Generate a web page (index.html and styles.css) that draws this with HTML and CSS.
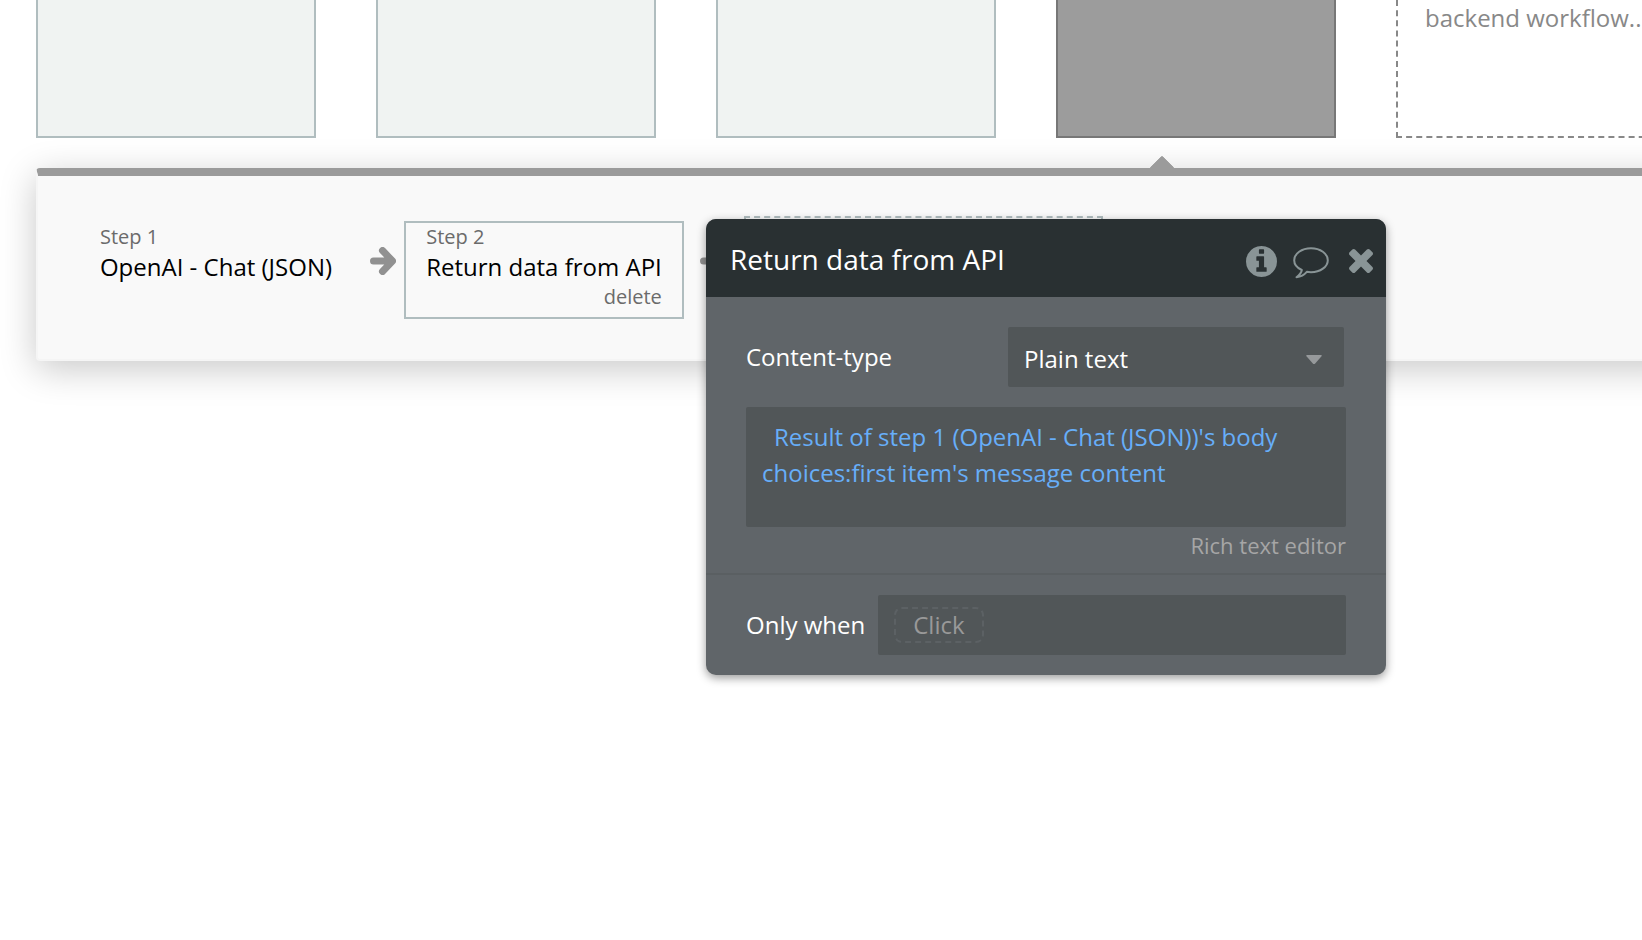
FILE: index.html
```html
<!DOCTYPE html>
<html lang="en">
<head>
    <meta charset="UTF-8">
    <meta name="viewport" content="width=device-width, initial-scale=1.0">
    <title>Backend Workflows</title>
    <link rel="stylesheet" href="styles.css">
</head>
<body>
    <div class="workflows">
        <div class="events">
            <div class="event"></div>
            <div class="event"></div>
            <div class="event"></div>
            <div class="event active"></div>
            <div class="event new-event">backend workflow...</div>
        </div>

        <div class="actions">
            <div class="notch"></div>
            <div class="step">
                <div class="step-text">
                    <div class="step-number">Step 1</div>
                    <div class="step-name">OpenAI - Chat (JSON)</div>
                </div>
            </div>
            <svg class="arrow" viewBox="0 0 26 28">
                <path d="M3.5 14H21M12.500 3.500L22.500 14L12.500 24.500" />
            </svg>
            <div class="step selected">
                <div class="step-text">
                    <div class="step-number">Step 2</div>
                    <div class="step-name">Return data from API</div>
                    <button type="button" class="delete-btn">delete</button>
                </div>
            </div>
            <svg class="arrow second" viewBox="0 0 26 28">
                <path d="M3.5 14H21M12.500 3.500L22.500 14L12.500 24.500" />
            </svg>
            <div class="new-step"></div>
        </div>
    </div>

    <div class="editor">
        <div class="editor-header">
            <h1>Return data from API</h1>
            <button type="button" class="icon-btn" aria-label="Info">
                <svg width="31" height="31" viewBox="128 128 1536 1536">
                    <path d="M1152 1376v-160q0-14-9-23t-23-9h-96v-512q0-14-9-23t-23-9h-320q-14 0-23 9t-9 23v160q0 14 9 23t23 9h96v320h-96q-14 0-23 9t-9 23v160q0 14 9 23t23 9h448q14 0 23-9t9-23zm-128-896v-160q0-14-9-23t-23-9h-192q-14 0-23 9t-9 23v160q0 14 9 23t23 9h192q14 0 23-9t9-23zm640 416q0 209-103 385.5t-279.5 279.5-385.5 103-385.5-103-279.5-279.5-103-385.5 103-385.5 279.5-279.5 385.5-103 385.5 103 279.5 279.5 103 385.5z" />
                </svg>
            </button>
            <button type="button" class="icon-btn comment-btn" aria-label="Comment">
                <svg width="36" height="32" viewBox="0 0 36 32">
                    <path d="M18 1.200C8.700 1.200 1.200 6.600 1.200 13.200C1.200 17.200 4.200 20.900 8.800 23C8.400 26 6.500 28 3.500 30.200C7.500 29.700 11 28 13.800 24.800C15.200 25.100 16.600 25.200 18 25.200C27.300 25.200 34.800 19.800 34.800 13.200C34.800 6.600 27.300 1.200 18 1.200Z" />
                </svg>
            </button>
            <button type="button" class="icon-btn" aria-label="Close">
                <svg width="24" height="24" viewBox="302 366 1188 1188">
                    <path d="M1490 1322q0 40-28 68l-136 136q-28 28-68 28t-68-28l-294-294-294 294q-28 28-68 28t-68-28l-136-136q-28-28-28-68t28-68l294-294-294-294q-28-28-28-68t28-68l136-136q28-28 68-28t68 28l294 294 294-294q28-28 68-28t68 28l136 136q28 28 28 68t-28 68l-294 294 294 294q28 28 28 68z" />
                </svg>
            </button>
        </div>

        <div class="editor-body">
            <div class="row type-row">
                <label for="contentType">Content-type</label>
                <div class="select-box">
                    <select id="contentType">
                        <option>Plain text</option>
                    </select>
                    <svg class="caret" width="16" height="10" viewBox="0 0 16 10">
                        <path d="M1 0H15Q16.500 0 15.500 1.300L9.200 8.500Q8 9.700 6.800 8.500L.5 1.300Q-.5 0 1 0Z" />
                    </svg>
                </div>
            </div>
            <textarea class="expression" aria-label="Returned text">Result of step 1 (OpenAI - Chat (JSON))'s body choices:first item's message content</textarea>
            <a href="#" class="rich-text">Rich text editor</a>
        </div>

        <div class="row condition">
            <span id="onlyWhen">Only when</span>
            <div class="condition-box">
                <button type="button" class="click-btn" aria-labelledby="onlyWhen">Click</button>
            </div>
        </div>
    </div>
</body>
</html>
```
FILE: styles.css
```css
/* General Styles */
* {
    box-sizing: border-box;
}

body {
    font-family: "Open Sans", "Noto Sans", sans-serif;
    font-size: 24px;
    line-height: 34px;
    margin: 0;
    background: #ffffff;
    color: #000000;
    position: relative;
    min-height: 100vh;
    overflow: hidden;
}

button, select, textarea {
    font: inherit;
    border: none;
    margin: 0;
    padding: 0;
    background: transparent;
}

button {
    cursor: pointer;
}

/* Workflow events */
.workflows {
    padding-left: 36px;
}

.events {
    display: flex;
    gap: 60px;
    margin-bottom: 30px;
}

.event {
    flex: 0 0 280px;
    height: 138px;
    background: #f0f3f2;
    border: 2px solid #b0bdbf;
    border-top: none;
}

.event.active {
    background: #9c9c9c;
    border-color: #777777;
}

.event.new-event {
    flex-basis: 360px;
    background: transparent;
    border: 2px dashed #888888;
    border-top: none;
    padding: 1px 27px;
    color: #888888;
}

/* Actions panel */
.actions {
    position: relative;
    display: flex;
    align-items: flex-start;
    height: 193px;
    margin-right: -40px;
    padding: 40px 38px 0;
    background: #f9f9f9;
    border: 2px solid #f5f5f5;
    border-top: 8px solid #9b9b9b;
    border-radius: 4px;
    box-shadow: 0 8px 36px rgba(0, 0, 0, 0.22);
}

.notch {
    position: absolute;
    left: 1115px;
    top: -17px;
    width: 18px;
    height: 18px;
    background: #9b9b9b;
    border-radius: 2px;
    transform: rotate(45deg);
    clip-path: polygon(0 0, 100% 0, 0 100%);
}

.step {
    flex: 0 0 280px;
    display: flex;
    justify-content: center;
    margin-top: 5px;
    padding: 1px 0 7px;
    border: 2px solid transparent;
}

.step.selected {
    border-color: #b0bdbf;
}

.step-number {
    font-size: 20px;
    line-height: 26px;
    color: #6b6b6b;
}

.delete-btn {
    display: block;
    margin-left: auto;
    font-size: 20px;
    line-height: 26px;
    color: #6b6b6b;
}

.arrow {
    flex: none;
    width: 26px;
    height: 28px;
    margin: 31px 8px 0 14px;
    fill: none;
    stroke: #919191;
    stroke-width: 7;
    stroke-linecap: round;
    stroke-linejoin: round;
}

.arrow.second {
    margin-left: 16px;
    margin-right: 18px;
}

.new-step {
    flex: 0 0 359px;
    height: 108px;
    border: 2px dashed #b0bdbf;
}

/* Property editor */
.editor {
    position: absolute;
    left: 706px;
    top: 219px;
    width: 680px;
    background: #606569;
    border-radius: 10px;
    box-shadow: 0 3px 10px rgba(0, 0, 0, 0.4);
    color: #ffffff;
    overflow: hidden;
}

.editor-header {
    display: flex;
    align-items: center;
    height: 78px;
    padding: 6px 13px 0 24px;
    background: #293032;
}

.editor-header h1 {
    flex: 1;
    margin: 0;
    padding-bottom: 4px;
    font-size: 28px;
    font-weight: normal;
}

.icon-btn {
    display: flex;
    margin-left: 20px;
    fill: #899496;
}

.comment-btn {
    margin-left: 16px;
    padding-top: 3px;
    fill: none;
    stroke: #899496;
    stroke-width: 2;
    stroke-linejoin: round;
}

.editor-body {
    padding: 30px 40px 11px;
    border-bottom: 2px solid #5a5f62;
}

.row {
    display: flex;
    align-items: center;
}

.type-row {
    justify-content: space-between;
    margin-bottom: 20px;
    padding-right: 2px;
}

.select-box {
    position: relative;
    width: 336px;
}

.select-box select {
    display: block;
    appearance: none;
    width: 100%;
    height: 60px;
    padding: 4px 16px 0;
    background: #515658;
    border-radius: 2px;
    color: #ffffff;
}

.caret {
    position: absolute;
    right: 22px;
    top: 28px;
    fill: #96999b;
    pointer-events: none;
}

.expression {
    display: block;
    width: 100%;
    height: 120px;
    padding: 12px 16px;
    background: #515658;
    border-radius: 2px;
    color: #67aef9;
    line-height: 36px;
    text-indent: 12px;
    resize: none;
    outline: none;
}

.rich-text {
    display: block;
    margin-top: 1px;
    text-align: right;
    font-size: 22px;
    color: #a6a6a6;
    text-decoration: none;
}

.condition {
    gap: 13px;
    padding: 20px 40px;
}

.condition-box {
    flex: 1;
    height: 60px;
    padding: 12px 16px;
    background: #515658;
    border-radius: 2px;
}

.click-btn {
    display: block;
    height: 36px;
    padding: 0 17px;
    border: 2px dashed #5c6164;
    border-radius: 8px;
    line-height: 32px;
    color: #999999;
}
```
